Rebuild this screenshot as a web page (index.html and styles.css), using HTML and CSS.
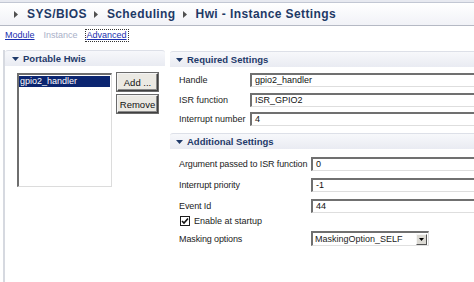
FILE: index.html
```html
<!DOCTYPE html>
<html>
<head>
<meta charset="utf-8">
<link rel="stylesheet" href="styles.css">
</head>
<body>
<div class="strip"></div>
<div class="title">
  <svg class="tri-r" width="4" height="7" viewBox="0 0 4 7"><polygon points="0,0 4,3.5 0,7" fill="#505050"/></svg>
  <span class="crumb">SYS/BIOS</span>
  <svg class="tri-r" width="4" height="7" viewBox="0 0 4 7"><polygon points="0,0 4,3.5 0,7" fill="#505050"/></svg>
  <span class="crumb">Scheduling</span>
  <svg class="tri-r" width="4" height="7" viewBox="0 0 4 7"><polygon points="0,0 4,3.5 0,7" fill="#505050"/></svg>
  <span class="crumb">Hwi - Instance Settings</span>
</div>
<div class="tabs">
  <span class="link">Module</span>
  <span class="dis">Instance</span>
  <span class="link focus">Advanced</span>
</div>
<div class="main">
  <section class="left">
    <div class="sec-head">
      <svg class="tri-d" width="7" height="4" viewBox="0 0 7 4"><polygon points="0,0 7,0 3.5,4" fill="#1f3a6a"/></svg>
      <span>Portable Hwis</span>
    </div>
    <div class="left-body">
      <div class="list"><div class="item sel">gpio2_handler</div></div>
      <div class="buttons">
        <div class="btn">Add ...</div>
        <div class="btn">Remove</div>
      </div>
    </div>
  </section>
  <div class="right">
    <section class="sec">
      <div class="sec-head">
        <svg class="tri-d" width="7" height="4" viewBox="0 0 7 4"><polygon points="0,0 7,0 3.5,4" fill="#1f3a6a"/></svg>
        <span>Required Settings</span>
      </div>
      <div class="rows req">
        <div class="row"><span class="lbl">Handle</span><div class="field">gpio2_handler</div></div>
        <div class="row"><span class="lbl">ISR function</span><div class="field">ISR_GPIO2</div></div>
        <div class="row"><span class="lbl">Interrupt number</span><div class="field">4</div></div>
      </div>
    </section>
    <section class="sec add">
      <div class="sec-head">
        <svg class="tri-d" width="7" height="4" viewBox="0 0 7 4"><polygon points="0,0 7,0 3.5,4" fill="#1f3a6a"/></svg>
        <span>Additional Settings</span>
      </div>
      <div class="rows adds">
        <div class="row"><span class="lbl">Argument passed to ISR function</span><div class="field">0</div></div>
        <div class="row"><span class="lbl">Interrupt priority</span><div class="field">-1</div></div>
        <div class="row"><span class="lbl">Event Id</span><div class="field">44</div></div>
        <div class="check-row">
          <span class="box"><svg width="8" height="8" viewBox="0 0 8 8"><path d="M1 4 L3 6 L7 1.5" fill="none" stroke="#111" stroke-width="1.6"/></svg></span>
          <span>Enable at startup</span>
        </div>
        <div class="sel-row">
          <span class="lbl">Masking options</span>
          <div class="select">
            <span class="sel-text">MaskingOption_SELF</span>
            <span class="drop"><svg width="5" height="3" viewBox="0 0 5 3"><polygon points="0,0 5,0 2.5,3" fill="#000"/></svg></span>
          </div>
        </div>
      </div>
    </section>
  </div>
</div>
</body>
</html>
```
FILE: styles.css
```css
html, body {
  margin: 0;
  padding: 0;
  overflow: hidden;
  background: #ffffff;
}
body {
  width: 474px;
  height: 282px;
  font-family: "Liberation Sans", Arial, sans-serif;
  font-size: 9px;
  color: #1c1c1c;
  white-space: nowrap;
}
.strip {
  height: 2px;
  background: #e7e9f0;
  border-bottom: 1px solid #c2c7d3;
}
.title {
  height: 22px;
  border-bottom: 1px solid #b5b9c4;
  background: linear-gradient(#ffffff, #f1f2f7);
  display: flex;
  align-items: center;
  padding-left: 14px;
  font-size: 12px;
  font-weight: bold;
  letter-spacing: 0.4px;
  color: #1e3966;
}
.tri-r { margin-right: 9px; flex: none; }
.crumb { margin-right: 7px; }
.tabs {
  height: 24px;
  box-sizing: border-box;
  padding: 4px 0 0 5px;
  display: flex;
  align-items: flex-start;
  line-height: 11px;
}
.link {
  color: #1a2fb0;
  text-decoration: underline;
  margin-right: 9px;
}
.dis {
  color: #a9b0c8;
  margin-right: 8px;
}
.focus {
  outline: 1px dotted #333;
  outline-offset: 0px;
  padding: 0 1px;
}
.main {
  display: flex;
}
.left {
  width: 160px;
  margin-left: 3px;
  height: 232px;
  border-left: 2px solid #d6d9e0;
}
.sec-head {
  height: 16px;
  box-sizing: border-box;
  border-top: 1px solid #dde0e8;
  border-radius: 3px 3px 0 0;
  background: linear-gradient(#f7f8fb, #e9ebf2);
  display: flex;
  align-items: center;
  padding-left: 7px;
  font-size: 9.5px;
  font-weight: bold;
  color: #1f3a6a;
}
.tri-d { margin-right: 4px; flex: none; }
.left-body {
  display: flex;
  padding: 7px 0 0 12px;
}
.list {
  width: 95px;
  height: 114px;
  box-sizing: border-box;
  border-top: 2px solid #6e6e6e;
  border-left: 2px solid #6e6e6e;
  border-right: 1px solid #dcdcdc;
  border-bottom: 1px solid #dcdcdc;
  padding-top: 1px;
}
.item {
  height: 11px;
  line-height: 11px;
  padding-left: 1px;
  margin-right: 1px;
}
.sel {
  background: #0b2570;
  color: #ffffff;
}
.buttons {
  display: flex;
  flex-direction: column;
  margin-left: 5px;
  gap: 4px;
}
.btn {
  width: 41px;
  height: 18px;
  box-sizing: border-box;
  border: 1px solid #f4f4f4;
  border-right-color: #404040;
  border-bottom-color: #404040;
  box-shadow: inset -1px -1px 0 #8a8a8a, 0 0 0 1px #6b6b6b;
  background: #ebe9e3;
  display: flex;
  align-items: center;
  justify-content: center;
  font-size: 9.5px;
  color: #111;
}
.right {
  flex: 1;
  margin-left: 5px;
  margin-top: 1px;
}
.right .sec-head {
  padding-left: 6px;
  margin-right: -10px;
}
.rows {
  padding-left: 9px;
}
.req {
  padding-top: 6px;
  padding-bottom: 7px;
}
.row {
  display: flex;
  align-items: center;
  height: 14px;
}
.req .row { margin-bottom: 5.5px; }
.req .row:last-child { margin-bottom: 0; }
.req .lbl { width: 71px; }
.adds { padding-top: 8px; }
.adds .row { margin-bottom: 7px; }
.adds .lbl { width: 132px; letter-spacing: -0.12px; }
.adds .row:nth-child(3) { margin-bottom: 1px; }
.lbl { flex: none; }
.field {
  flex: 1;
  height: 14px;
  box-sizing: border-box;
  margin-right: -20px;
  border-top: 2px solid #707070;
  border-left: 2px solid #707070;
  border-bottom: 1px solid #dedede;
  padding-left: 3px;
  line-height: 11px;
  color: #111;
}
.check-row {
  display: flex;
  align-items: center;
  height: 14px;
  padding-left: 1px;
}
.box {
  width: 10px;
  height: 10px;
  box-sizing: border-box;
  border: 1px solid #1c1c1c;
  display: flex;
  align-items: center;
  justify-content: center;
  margin-right: 4px;
  background: #fff;
}
.sel-row {
  display: flex;
  align-items: center;
  margin-top: 3px;
  height: 15px;
}
.select {
  width: 118px;
  height: 15px;
  box-sizing: border-box;
  border-top: 2px solid #707070;
  border-left: 2px solid #707070;
  border-right: 1px solid #e0e0e0;
  border-bottom: 1px solid #e0e0e0;
  display: flex;
  align-items: center;
  justify-content: space-between;
  padding-left: 2px;
}
.drop {
  width: 11px;
  height: 11px;
  box-sizing: border-box;
  margin-right: 1px;
  border: 1px solid #f6f6f6;
  border-right-color: #555;
  border-bottom-color: #555;
  background: #dcdad4;
  display: flex;
  align-items: center;
  justify-content: center;
}
```
